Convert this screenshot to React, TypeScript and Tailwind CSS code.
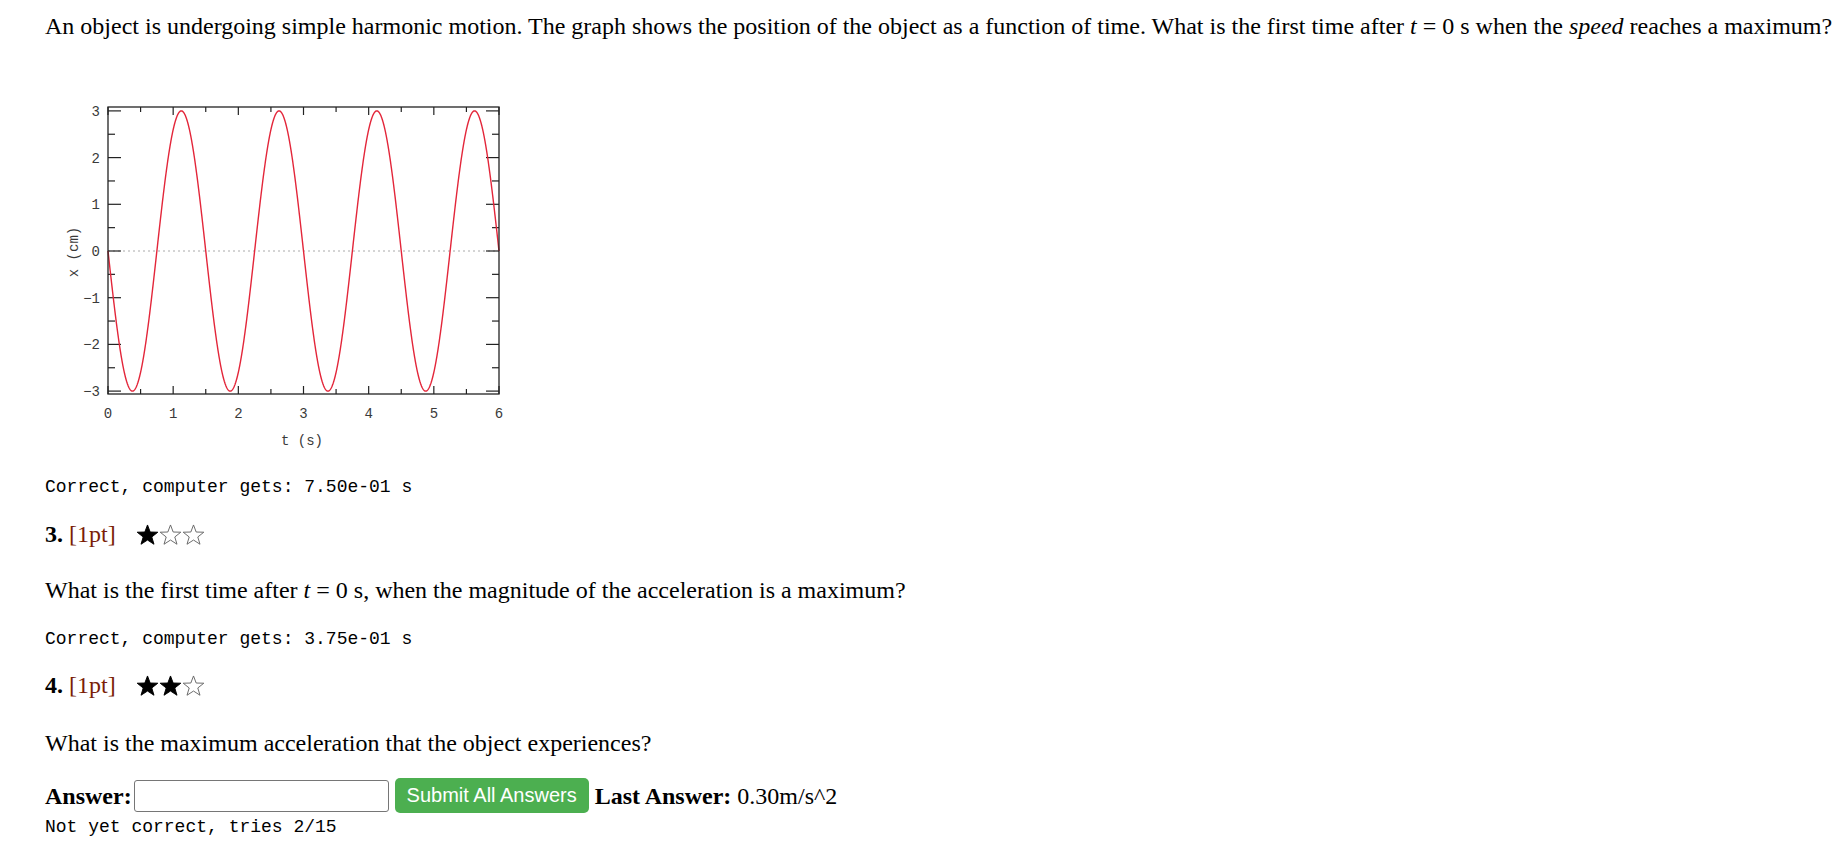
import React from "react";

const X0 = 63;
const X1 = 454;
const Y_TOP = 17;
const Y_BOT = 304;
const XS = (X1 - X0) / 6;
const Y0 = 161;
const YS = 46.7;

function px(t: number) {
  return X0 + t * XS;
}
function py(v: number) {
  return Y0 - v * YS;
}

function Graph() {
  const pts: string[] = [];
  for (let i = 0; i <= 1200; i++) {
    const t = (i / 1200) * 6;
    const v = -3 * Math.sin((2 * Math.PI * t) / 1.5);
    pts.push(`${px(t).toFixed(2)},${py(v).toFixed(2)}`);
  }
  const ticks: React.ReactNode[] = [];
  // x ticks every 0.5
  for (let i = 0; i <= 12; i++) {
    const t = i / 2;
    const len = i % 2 === 0 ? 8 : 5;
    const x = px(t);
    ticks.push(<line key={"xb" + i} x1={x} y1={Y_BOT} x2={x} y2={Y_BOT - len} />);
    ticks.push(<line key={"xt" + i} x1={x} y1={Y_TOP} x2={x} y2={Y_TOP + len} />);
  }
  // y ticks every 0.5
  for (let i = -6; i <= 6; i++) {
    const v = i / 2;
    const len = i % 2 === 0 ? 13 : 7;
    const y = py(v);
    ticks.push(<line key={"yl" + i} x1={X0} y1={y} x2={X0 + len} y2={y} />);
    ticks.push(<line key={"yr" + i} x1={X1} y1={y} x2={X1 - len} y2={y} />);
  }
  return (
    <svg width="470" height="365" className="block mt-[51px]">
      <g fill="#3a3a3a" fontFamily="'Liberation Mono', monospace" fontSize="14">
        {[3, 2, 1, 0, -1, -2, -3].map((v) => (
          <text key={v} x={55} y={py(v) + 5} textAnchor="end">
            {v < 0 ? "\u2212" + Math.abs(v) : v}
          </text>
        ))}
        {[0, 1, 2, 3, 4, 5, 6].map((t) => (
          <text key={t} x={px(t)} y={328} textAnchor="middle">
            {t}
          </text>
        ))}
        <text x={257} y={355} textAnchor="middle">
          t (s)
        </text>
        <text x={0} y={0} textAnchor="middle" transform="translate(33 162) rotate(-90)">
          x (cm)
        </text>
      </g>
      <line x1={X0} y1={Y0} x2={X1} y2={Y0} stroke="#aaa" strokeWidth="1" strokeDasharray="2 3" />
      <g stroke="#222" strokeWidth="1.2">{ticks}</g>
      <polyline points={pts.join(" ")} fill="none" stroke="#e3263a" strokeWidth="1.4" />
      <rect x={X0} y={Y_TOP} width={X1 - X0} height={Y_BOT - Y_TOP} fill="none" stroke="#222" strokeWidth="1.3" />
    </svg>
  );
}

function Star({ filled }: { filled: boolean }) {
  return (
    <svg width="23" height="21" viewBox="0 0 24 22">
      <polygon
        points="12,1 14.8,8.4 22.8,8.6 16.5,13.6 18.8,21.2 12,16.8 5.2,21.2 7.5,13.6 1.2,8.6 9.2,8.4"
        fill={filled ? "#000" : "#fff"}
        stroke={filled ? "#000" : "#666"}
        strokeWidth="1"
        strokeLinejoin="round"
      />
    </svg>
  );
}

function Header({ n, filled }: { n: number; filled: number }) {
  return (
    <div className="flex items-center h-[30px] leading-[30px]">
      <span className="font-bold">{n}.</span>
      <span className="ml-[6px] text-[#7a1e08]">[1pt]</span>
      <span className="ml-[20px] flex items-center">
        {[0, 1, 2].map((i) => (
          <Star key={i} filled={i < filled} />
        ))}
      </span>
    </div>
  );
}

const mono = "font-['Liberation_Mono',monospace] text-[18px] leading-[22px] text-black";

export default function App() {
  return (
    <div className="min-h-screen bg-white pl-[45px] pt-[13px] font-['Liberation_Serif',serif] text-[24px] text-black">
      <p className="leading-[26px] whitespace-nowrap">
        An object is undergoing simple harmonic motion. The graph shows the position of the object as a function of
        time. What is the first time after <i>t</i> = 0 s when the <i>speed</i> reaches a maximum?
      </p>

      <Graph />

      <div className={`${mono} mt-[21px]`}>Correct, computer gets: 7.50e-01 s</div>

      <div className="mt-[21px]">
        <Header n={3} filled={1} />
      </div>

      <p className="mt-[28px] leading-[26px]">
        What is the first time after <i>t</i> = 0 s, when the magnitude of the acceleration is a maximum?
      </p>

      <div className={`${mono} mt-[25px]`}>Correct, computer gets: 3.75e-01 s</div>

      <div className="mt-[20px]">
        <Header n={4} filled={2} />
      </div>

      <p className="mt-[30px] leading-[26px]">What is the maximum acceleration that the object experiences?</p>

      <div className="mt-[22px] flex items-center h-[35px]">
        <span className="font-bold">Answer:</span>
        <input
          type="text"
          className="ml-[2px] w-[255px] h-[32px] border border-[#767676] rounded-[3px] bg-white px-1 outline-none"
        />
        <button className="ml-[6px] h-[35px] w-[194px] rounded-[5px] bg-[#4caf50] text-white font-['Liberation_Sans',sans-serif] text-[20px] leading-[35px]">
          Submit All Answers
        </button>
        <span className="ml-[6px] font-bold">Last Answer:</span>
        <span className="ml-[6px]">0.30m/s^2</span>
      </div>

      <div className={`${mono} mt-[3px]`}>Not yet correct, tries 2/15</div>
    </div>
  );
}
